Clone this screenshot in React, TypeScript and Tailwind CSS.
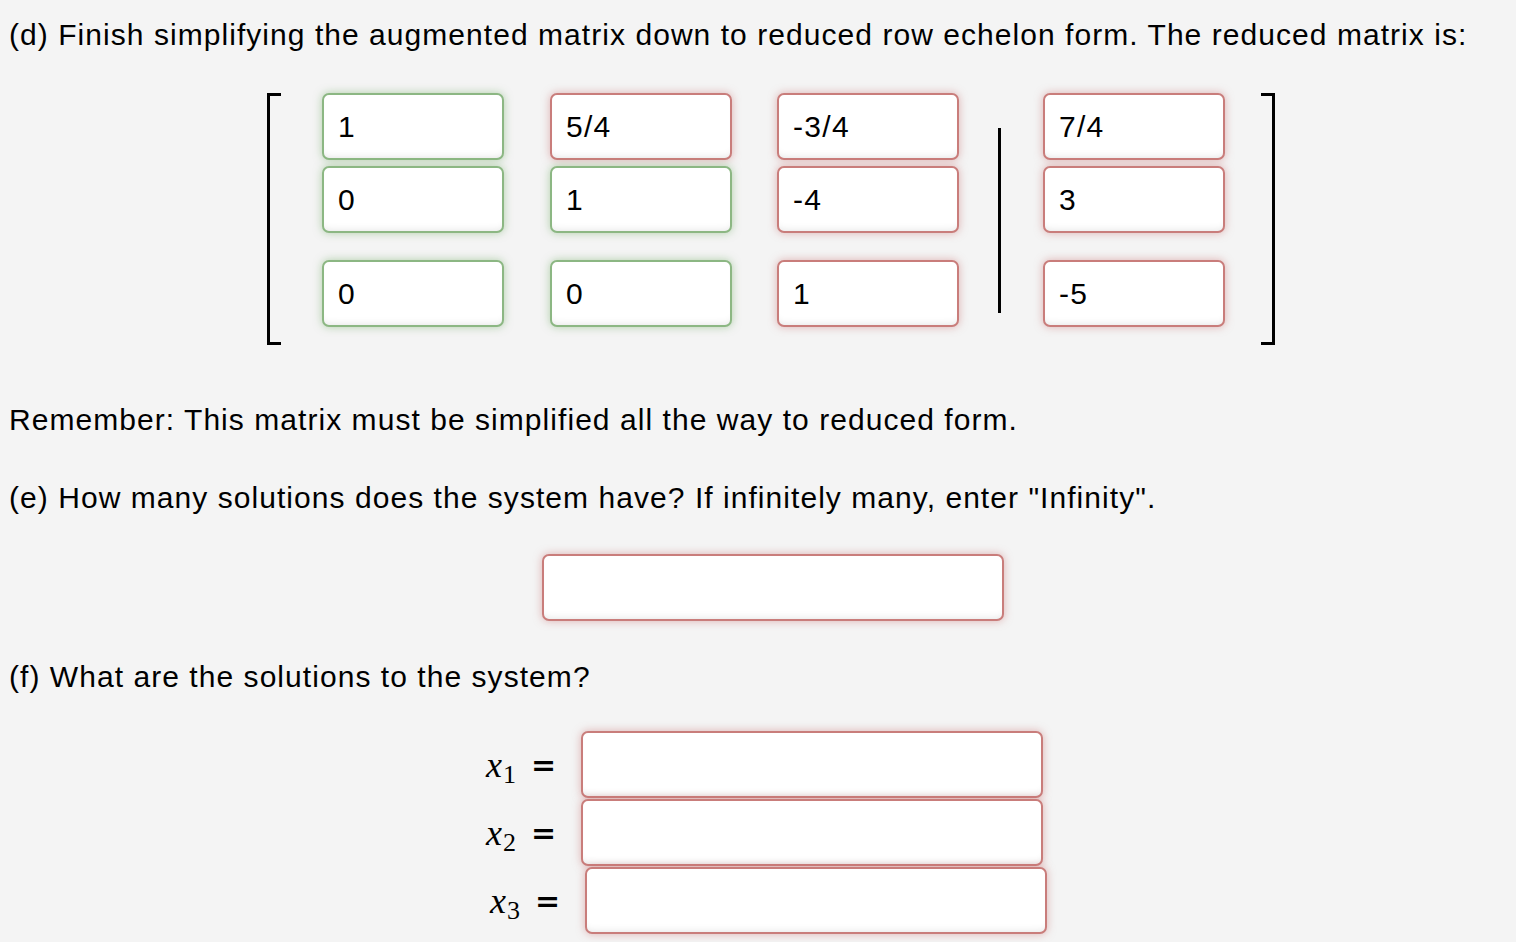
import React from "react";

const GREEN =
  "border-[2px] border-[#8cb783] shadow-[0_0_9px_rgba(110,170,95,0.5),inset_0_-7px_8px_-7px_rgba(0,0,0,0.12)]";
const RED =
  "border-[2px] border-[#c97d7b] shadow-[0_0_9px_rgba(200,110,110,0.5),inset_0_-7px_8px_-7px_rgba(0,0,0,0.12)]";

function Cell({ value, ok }: { value: string; ok: boolean }) {
  return (
    <div
      className={`h-[67px] w-[182px] rounded-[7px] bg-white pl-[14px] flex items-center text-[30px] tracking-[1.3px] text-black ${ok ? GREEN : RED}`}
    >
      {value}
    </div>
  );
}

function Blank() {
  return <div className={`h-[67px] w-[462px] rounded-[7px] bg-white ${RED}`} />;
}

function VarRow({ n, ml }: { n: number; ml: number }) {
  return (
    <div className="flex items-center" style={{ marginLeft: ml }}>
      <div className="w-[95px] flex items-center">
        <span className="text-[36px] leading-none" style={{ fontFamily: '"Liberation Serif", serif' }}>
          <i>x</i>
          <span className="text-[26px] relative top-[6px] ml-[1px]">{n}</span>
        </span>
        <span
          className="ml-[15px] text-[30px] font-bold leading-none"
          style={{ fontFamily: '"DejaVu Serif", serif' }}
        >
          =
        </span>
      </div>
      <Blank />
    </div>
  );
}

export default function App() {
  const cols = [
    [
      { v: "1", ok: true },
      { v: "0", ok: true },
      { v: "0", ok: true },
    ],
    [
      { v: "5/4", ok: false },
      { v: "1", ok: true },
      { v: "0", ok: true },
    ],
    [
      { v: "-3/4", ok: false },
      { v: "-4", ok: false },
      { v: "1", ok: false },
    ],
  ];
  const rhs = ["7/4", "3", "-5"];

  const column = (items: { v: string; ok: boolean }[]) => (
    <div className="flex flex-col">
      <Cell value={items[0].v} ok={items[0].ok} />
      <div className="mt-[6px]">
        <Cell value={items[1].v} ok={items[1].ok} />
      </div>
      <div className="mt-[27px]">
        <Cell value={items[2].v} ok={items[2].ok} />
      </div>
    </div>
  );

  return (
    <div
      className="min-h-[942px] w-full bg-[#f4f4f4] text-black pb-[6px]"
      style={{ fontFamily: '"Liberation Sans", Arial, sans-serif' }}
    >
      <p className="pt-[17px] pl-[9px] text-[30px] tracking-[1.05px] leading-[36px]">
        (d) Finish simplifying the augmented matrix down to reduced row echelon form. The reduced matrix is:
      </p>

      <div className="mt-[40px] ml-[267px] flex">
        <div className="h-[252px] w-[14px] border-l-[3px] border-t-[3px] border-b-[3px] border-black" />
        <div className="ml-[41px] flex">
          {column(cols[0])}
          <div className="ml-[46px]">{column(cols[1])}</div>
          <div className="ml-[45px]">{column(cols[2])}</div>
          <div className="ml-[39px] mt-[35px] h-[185px] w-[3px] bg-black" />
          <div className="ml-[42px]">
            {column(rhs.map((v) => ({ v, ok: false })))}
          </div>
        </div>
        <div className="ml-[36px] h-[252px] w-[14px] border-r-[3px] border-t-[3px] border-b-[3px] border-black" />
      </div>

      <p className="mt-[57px] pl-[9px] text-[30px] tracking-[1.05px] leading-[36px]">
        Remember: This matrix must be simplified all the way to reduced form.
      </p>
      <p className="mt-[42px] pl-[9px] text-[30px] tracking-[1.05px] leading-[36px]">
        (e) How many solutions does the system have? If infinitely many, enter "Infinity".
      </p>
      <div className="mt-[38px] ml-[542px]">
        <Blank />
      </div>
      <p className="mt-[38px] pl-[9px] text-[30px] tracking-[1.05px] leading-[36px]">
        (f) What are the solutions to the system?
      </p>

      <div className="mt-[36px] flex flex-col gap-[1px]">
        <VarRow n={1} ml={486} />
        <VarRow n={2} ml={486} />
        <VarRow n={3} ml={490} />
      </div>
    </div>
  );
}
